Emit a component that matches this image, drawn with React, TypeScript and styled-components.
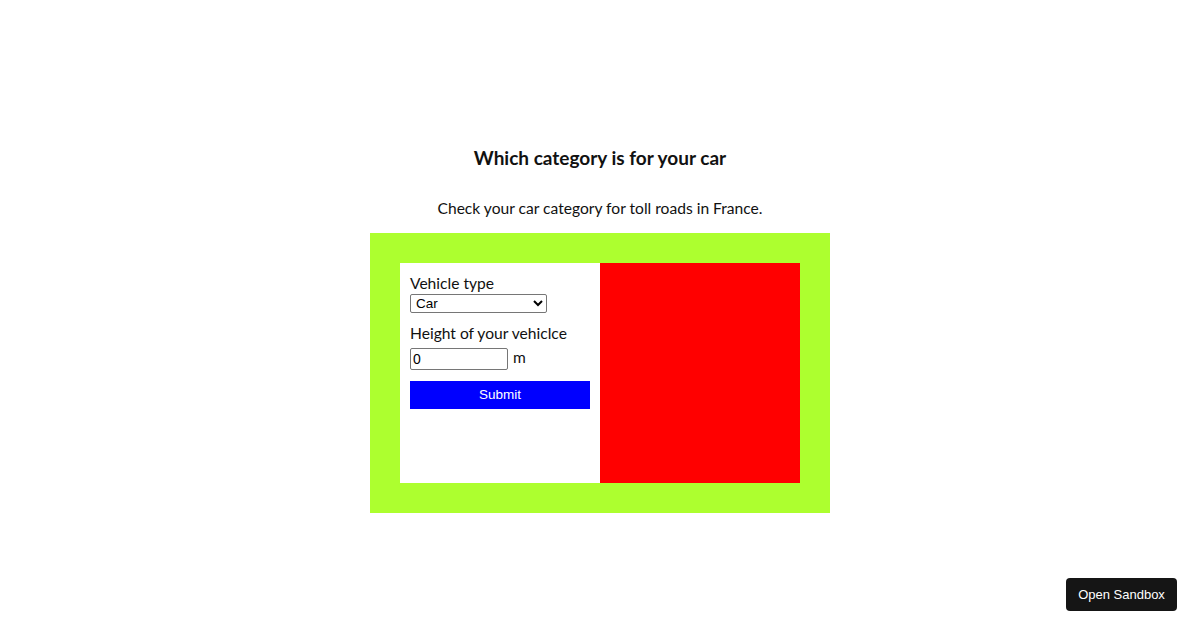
import React, { useState } from "react";
import styled, { createGlobalStyle } from "styled-components";

const GlobalStyle = createGlobalStyle`
  html, body {
    margin: 0;
    padding: 0;
    background: #ffffff;
  }
  body {
    font-family: Lato, "Liberation Sans", sans-serif;
    color: #111111;
  }
`;

const Page = styled.main`
  display: flex;
  flex-direction: column;
  align-items: center;
  width: 1200px;
  height: 630px;
  padding-top: 146px;
  box-sizing: border-box;
`;

const Title = styled.h3`
  margin: 0;
  font-size: 19px;
  line-height: 23px;
  font-weight: 700;
`;

const Lead = styled.p`
  margin: 30px 0 15px;
  font-size: 15.6px;
  line-height: 19px;
`;

const Frame = styled.section`
  display: flex;
  width: 400px;
  padding: 30px;
  background: #adff2f;
`;

const FormPanel = styled.form`
  display: flex;
  flex-direction: column;
  align-items: flex-start;
  width: 200px;
  height: 220px;
  padding: 10px;
  box-sizing: border-box;
  background: #ffffff;
`;

const Result = styled.div`
  width: 200px;
  height: 220px;
  background: #ff0000;
`;

const Label = styled.label<{ $top: number }>`
  margin-top: ${({ $top }) => $top}px;
  font-size: 15.6px;
  line-height: 21px;
`;

const Select = styled.select`
  width: 137px;
  height: 19px;
  margin: 0;
  padding: 0 0 0 1px;
  font-family: "Liberation Sans", Arial, sans-serif;
  font-size: 13.5px;
  border: 1px solid #767676;
  border-radius: 2px;
  background: #ffffff;
  color: #000000;
`;

const InputRow = styled.div`
  display: flex;
  align-items: flex-start;
  gap: 5px;
  margin-top: 4px;
  font-size: 15.6px;
  line-height: 18px;
`;

const Input = styled.input`
  width: 98px;
  height: 22px;
  margin: 0;
  padding: 1px 2px;
  box-sizing: border-box;
  font-family: "Liberation Sans", Arial, sans-serif;
  font-size: 14px;
  border: 1px solid #767676;
  border-radius: 2px;
  color: #000000;
`;

const SubmitButton = styled.button`
  width: 180px;
  height: 28px;
  margin-top: 11px;
  padding: 0 0 2px;
  border: none;
  background: #0000ff;
  color: #ffffff;
  font-family: "Liberation Sans", Arial, sans-serif;
  font-size: 13.5px;
  cursor: pointer;
`;

const SandboxButton = styled.a`
  position: fixed;
  right: 23px;
  bottom: 19px;
  display: flex;
  align-items: center;
  justify-content: center;
  width: 111px;
  height: 33px;
  border-radius: 4px;
  background: #151515;
  color: #ffffff;
  font-family: "Liberation Sans", Arial, sans-serif;
  font-size: 13px;
  text-decoration: none;
`;

export default function App() {
  const [vehicle, setVehicle] = useState("car");
  const [height, setHeight] = useState("0");

  return (
    <>
      <GlobalStyle />
      <Page>
        <Title>Which category is for your car</Title>
        <Lead>Check your car category for toll roads in France.</Lead>
        <Frame>
          <FormPanel onSubmit={(e) => e.preventDefault()}>
            <Label $top={0}>Vehicle type</Label>
            <Select value={vehicle} onChange={(e) => setVehicle(e.target.value)}>
              <option value="car">Car</option>
              <option value="motorbike">Motorbike</option>
            </Select>
            <Label $top={10}>Height of your vehiclce</Label>
            <InputRow>
              <Input value={height} onChange={(e) => setHeight(e.target.value)} />
              <span>m</span>
            </InputRow>
            <SubmitButton type="submit">Submit</SubmitButton>
          </FormPanel>
          <Result />
        </Frame>
      </Page>
      <SandboxButton href="#">Open Sandbox</SandboxButton>
    </>
  );
}
